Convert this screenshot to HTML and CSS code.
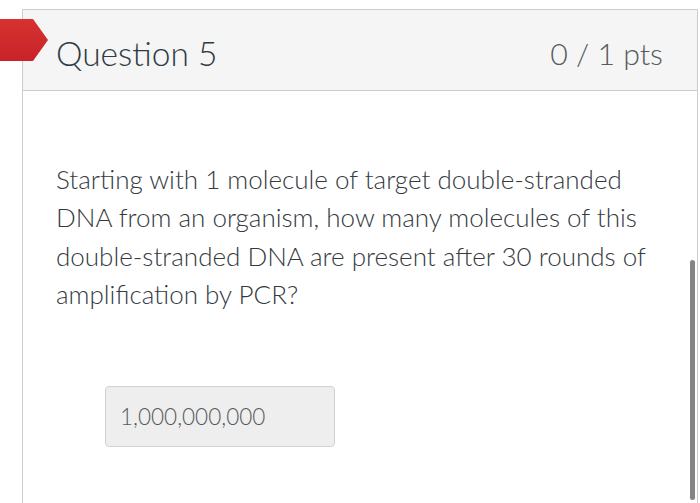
FILE: index.html
```html
<!DOCTYPE html>
<html>
<head>
<meta charset="utf-8">
<link rel="stylesheet" href="styles.css">
</head>
<body>
<div class="page">
  <div class="flag"></div>
  <div class="card">
    <div class="header">
      <h2 class="title">Question 5</h2>
      <div class="pts">0 / 1 pts</div>
    </div>
    <div class="content">
      <p class="question">Starting with 1 molecule of target double-stranded DNA from an organism, how many molecules of this double-stranded DNA are present after 30 rounds of amplification by PCR?</p>
      <div class="answer">1,000,000,000</div>
    </div>
  </div>
  <div class="scrollbar"></div>
</div>
</body>
</html>
```
FILE: styles.css
```css
html, body {
  margin: 0;
  padding: 0;
  background: #ffffff;
  overflow: hidden;
}
body {
  font-family: Lato, "Open Sans", sans-serif;
  font-weight: 300;
  color: #2d3b45;
}
.page {
  position: relative;
  width: 700px;
  height: 503px;
  padding-top: 9px;
  box-sizing: border-box;
}
.card {
  margin-left: 22px;
  width: 676px;
  height: 500px;
  border: 1px solid #c7cdd1;
  border-bottom: none;
  box-sizing: border-box;
}
.header {
  height: 81px;
  background: #f5f5f5;
  border-bottom: 1px solid #c7cdd1;
  box-sizing: border-box;
  display: flex;
  align-items: center;
  justify-content: space-between;
  padding: 5px 34px 0 33px;
}
.title {
  margin: 0;
  font-weight: 300;
  font-size: 33.5px;
  color: #2d3b45;
}
.pts {
  font-size: 30.3px;
  color: #555b60;
}
.content {
  padding: 69px 20px 0 33px;
}
.question {
  margin: 0;
  font-size: 26px;
  line-height: 38.4px;
  color: #353a3f;
}
.answer {
  margin-top: 72px;
  margin-left: 49px;
  width: 230px;
  height: 61px;
  box-sizing: border-box;
  background: #eeeeee;
  border: 1px solid #cfd2d4;
  border-radius: 4px;
  display: flex;
  align-items: center;
  padding-left: 14px;
  font-size: 22.5px;
  color: #555b60;
}
.flag {
  position: absolute;
  left: 0;
  top: 19px;
  width: 48px;
  height: 42px;
  background: linear-gradient(180deg, #d6322f 0%, #c9232a 100%);
  clip-path: polygon(0 0, 33px 0, 48px 50%, 33px 100%, 0 100%);
}
.scrollbar {
  position: absolute;
  left: 690px;
  top: 260px;
  width: 5px;
  height: 240px;
  border-radius: 3px;
  background: #858585;
}
```
